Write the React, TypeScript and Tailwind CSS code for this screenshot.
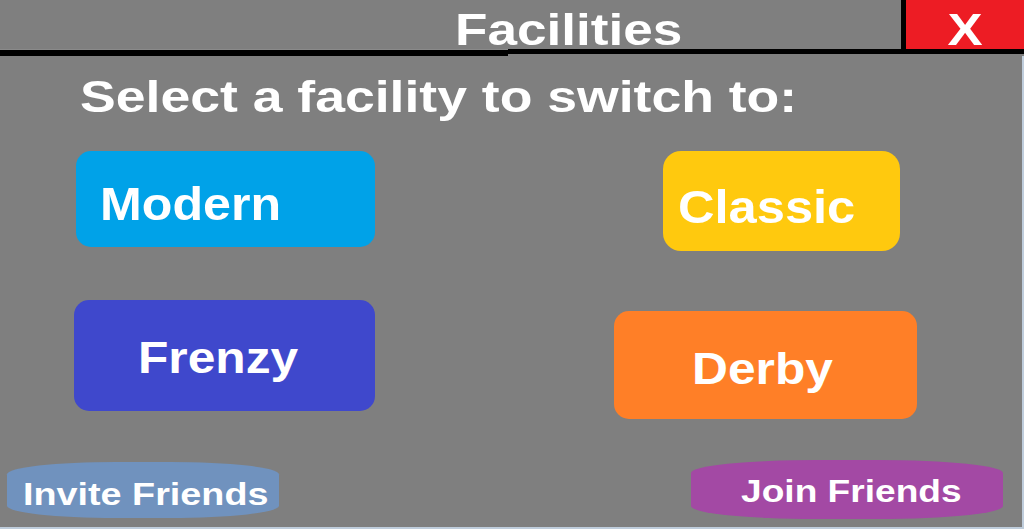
import React from "react";

const font = { fontFamily: '"Liberation Sans", Arial, sans-serif' };

export default function App() {
  return (
    <div
      className="w-[1024px] h-[529px] bg-[#7f7f7f] flex flex-col overflow-hidden text-white font-bold"
      style={font}
    >
      {/* Header */}
      <div className="flex flex-row h-[49px] shrink-0">
        <div className="flex-1 pl-[455px]">
          <div className="mt-[7px] text-[45px] leading-[45px] whitespace-nowrap w-max origin-left scale-x-[1.18]">
            Facilities
          </div>
        </div>
        <div className="w-[5px] bg-black" />
        <div className="w-[118px] bg-[#ed1c24] flex justify-center">
          <div className="mt-[7px] text-[45px] leading-[45px] scale-x-[1.17]">X</div>
        </div>
      </div>
      {/* Stepped black rule */}
      <div className="flex flex-row h-[7px] shrink-0">
        <div className="w-[508px] flex flex-col">
          <div className="h-[1px] bg-[#8a8a8a]" />
          <div className="h-[6px] bg-black" />
        </div>
        <div className="flex-1 flex flex-col">
          <div className="h-[5px] bg-black" />
        </div>
      </div>

      {/* Body */}
      <div className="flex-1 flex flex-col border-r-2 border-b-2 border-[#bfcddc]">
        <div className="pl-[80px] mt-[18px]">
          <div className="text-[45px] leading-[45px] whitespace-nowrap w-max origin-left scale-x-[1.19]">
            Select a facility to switch to:
          </div>
        </div>

        {/* Row 1 */}
        <div className="flex flex-row items-start mt-[32px]">
          <div className="ml-[76px] w-[299px] h-[96px] rounded-[15px] bg-[#00a2e8] pl-[24px] pt-[30px]">
            <div className="text-[46px] leading-[46px] whitespace-nowrap w-max origin-left scale-x-[1.09]">
              Modern
            </div>
          </div>
          <div className="ml-[288px] w-[237px] h-[100px] rounded-[18px] bg-[#ffc90e] pl-[15px] pt-[33px]">
            <div className="text-[46px] leading-[46px] whitespace-nowrap w-max origin-left scale-x-[1.1]">
              Classic
            </div>
          </div>
        </div>

        {/* Row 2 */}
        <div className="flex flex-row items-start mt-[49px]">
          <div className="ml-[74px] w-[301px] h-[111px] rounded-[15px] bg-[#3f48cc] pl-[64px] pt-[36px]">
            <div className="text-[44px] leading-[44px] whitespace-nowrap w-max origin-left scale-x-[1.13]">
              Frenzy
            </div>
          </div>
          <div className="ml-[239px] mt-[11px] w-[303px] h-[108px] rounded-[15px] bg-[#ff7f27] pl-[78px] pt-[36px]">
            <div className="text-[44px] leading-[44px] whitespace-nowrap w-max origin-left scale-x-[1.13]">
              Derby
            </div>
          </div>
        </div>

        {/* Row 3 */}
        <div className="flex flex-row items-start mt-[41px]">
          <div className="ml-[7px] mt-[2px] w-[272px] h-[56px] rounded-[40%/22%] bg-[#7092be] pl-[16px] pt-[16px]">
            <div className="text-[32px] leading-[32px] whitespace-nowrap w-max origin-left scale-x-[1.18]">
              Invite Friends
            </div>
          </div>
          <div className="ml-[412px] w-[312px] h-[59px] rounded-[40%/22%] bg-[#a349a4] pl-[50px] pt-[15px]">
            <div className="text-[32px] leading-[32px] whitespace-nowrap w-max origin-left scale-x-[1.16]">
              Join Friends
            </div>
          </div>
        </div>
      </div>
    </div>
  );
}
